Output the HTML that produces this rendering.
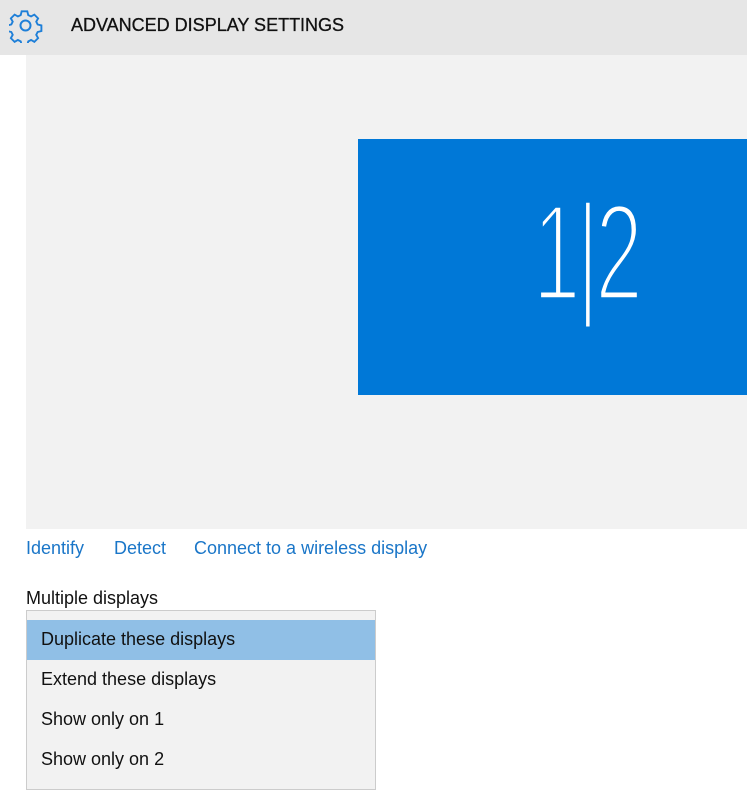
<!DOCTYPE html>
<html><head><style>
body{margin:0;width:747px;height:794px;background:#fff;font-family:"Liberation Sans",sans-serif;position:relative;overflow:hidden}
.a{position:absolute}
</style></head><body>
<div class="a" style="left:0;top:0;width:747px;height:55px;background:#e6e6e6"></div>
<svg class="a" style="left:9px;top:9px" width="34" height="34" viewBox="0 0 34 34" fill="none" stroke="#1e7fd8" stroke-width="2">
<path d="M14 3h6l1 4 3 1.5 3.5-2 4 4-2 3.5 1.5 3 4 1v6l-4 1-1.5 3 2 3.5-4 4-3.5-2-3 1.5-1 4h-6l-1-4-3-1.5-3.5 2-4-4 2-3.5-1.5-3-4-1v-6l4-1 1.5-3-2-3.5 4-4 3.5 2 3-1.5z" transform="translate(-0.5,-0.5) scale(0.94)"/>
<circle cx="16.5" cy="16.5" r="5"/>
</svg>
<div class="a" style="left:71px;top:15px;font-size:18px;color:#111;-webkit-text-stroke:0.3px #111">ADVANCED DISPLAY SETTINGS</div>
<div class="a" style="left:26px;top:55px;width:721px;height:474px;background:#f2f2f2"></div>
<div class="a" style="left:358px;top:139px;width:389px;height:256px;background:#0078d7"></div>
<div class="a" style="left:436px;top:183px;width:300px;text-align:center;font-size:138px;line-height:140px;color:#fff;-webkit-text-stroke:5.5px #0078d7;transform:scaleX(0.62);letter-spacing:-6px">1|2</div>
<div class="a" style="left:26px;top:538px;font-size:18px;color:#1a76c8">Identify</div>
<div class="a" style="left:114px;top:538px;font-size:18px;color:#1a76c8">Detect</div>
<div class="a" style="left:194px;top:538px;font-size:18px;color:#1a76c8">Connect to a wireless display</div>
<div class="a" style="left:26px;top:588px;font-size:18px;color:#111">Multiple displays</div>
<div class="a" style="left:26px;top:610px;width:348px;height:178px;background:#f2f2f2;border:1px solid #ccc"></div>
<div class="a" style="left:27px;top:620px;width:348px;height:40px;background:#90bfe6"></div>
<div class="a" style="left:41px;top:629px;font-size:18px;color:#111">Duplicate these displays</div>
<div class="a" style="left:41px;top:669px;font-size:18px;color:#111">Extend these displays</div>
<div class="a" style="left:41px;top:709px;font-size:18px;color:#111">Show only on 1</div>
<div class="a" style="left:41px;top:749px;font-size:18px;color:#111">Show only on 2</div>
</body></html>
